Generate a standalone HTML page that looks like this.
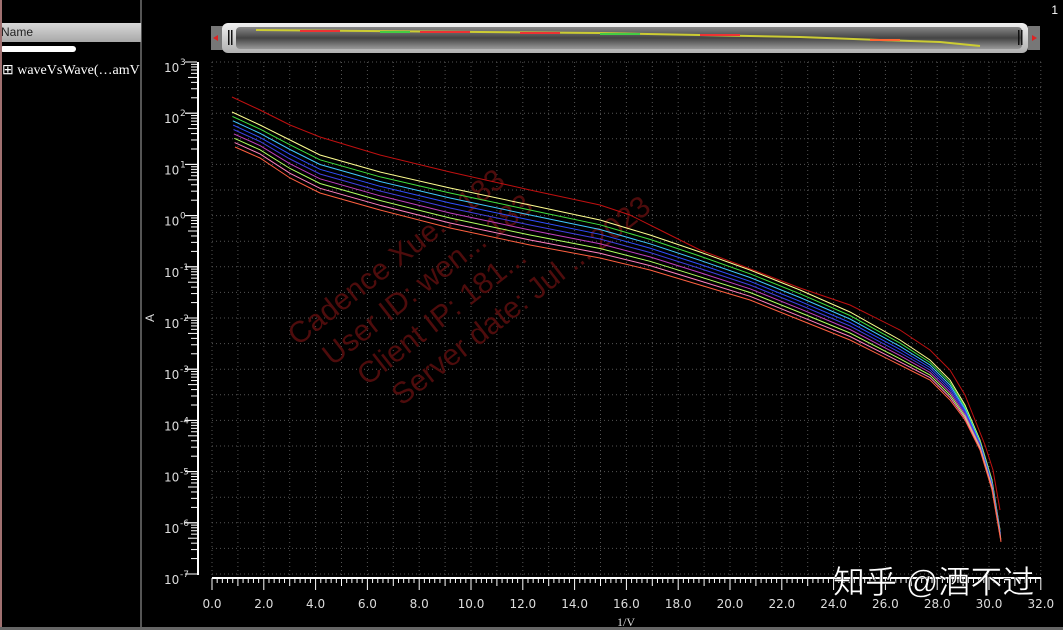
<!DOCTYPE html>
<html><head><meta charset="utf-8"><style>
body{margin:0;width:1063px;height:630px;background:#000;overflow:hidden;position:relative;font-family:"Liberation Sans",sans-serif}
.left{position:absolute;left:0;top:0;width:140px;height:630px;border-right:2px solid #555}
.hdr{position:absolute;left:0;top:23px;width:140px;height:19px;background:linear-gradient(#d8d8d8,#a8a8a8);color:#222;font-size:12px;line-height:19px;padding-left:1px}
.bar{position:absolute;left:0;top:46px;width:76px;height:6px;background:#fff;border-radius:3px}
.item{position:absolute;left:2px;top:62px;color:#fff;font-family:"Liberation Serif",serif;font-size:14px;white-space:nowrap;width:138px;overflow:hidden}
.edge{position:absolute;left:0;top:0;width:2px;height:630px;background:#a07070}
.bot{position:absolute;left:0;top:627px;width:1063px;height:3px;background:#666}
</style></head><body>
<div class="left"><div class="hdr">Name</div><div class="bar"></div><div class="item">⊞ waveVsWave(…amV</div></div>
<div class="edge"></div>
<div style="position:absolute;right:5px;top:3px;color:#fff;font-size:12px">1</div>
<svg width="1063" height="630" style="position:absolute;left:0;top:0" id="s">
<defs>
<linearGradient id="g1" x1="0" y1="0" x2="0" y2="1"><stop offset="0" stop-color="#f0f0f0"/><stop offset="1" stop-color="#b0b0b0"/></linearGradient>
<linearGradient id="g2" x1="0" y1="0" x2="0" y2="1"><stop offset="0" stop-color="#888"/><stop offset=".5" stop-color="#444"/><stop offset="1" stop-color="#999"/></linearGradient>
</defs>
<rect x="211" y="26" width="14" height="24" fill="#777"/><path d="M213 38l5-3v6z" fill="#d22"/>
<rect x="1028" y="26" width="12" height="24" fill="#777"/><path d="M1037 38l-5-3v6z" fill="#d22"/>
<rect x="222" y="23" width="806" height="30" rx="6" fill="url(#g1)"/>
<rect x="236" y="27" width="786" height="22" rx="4" fill="url(#g2)"/>
<rect x="228" y="30" width="1.5" height="15" fill="#111"/><rect x="231" y="30" width="1.5" height="15" fill="#111"/>
<rect x="1018" y="30" width="1.5" height="15" fill="#111"/><rect x="1021" y="30" width="1.5" height="15" fill="#111"/>
<path d="M256 30 L600 33 L800 37 L880 40 L940 42 L980 46" stroke="#cc3" stroke-width="2" fill="none"/>
<path d="M300 31 L340 31 M420 32 L470 32 M520 33 L560 33 M700 35 L740 35" stroke="#e33" stroke-width="2" fill="none"/>
<path d="M380 32 L410 32 M600 34 L640 34" stroke="#4c4" stroke-width="2" fill="none"/>
<path d="M870 40 L900 40" stroke="#f63" stroke-width="2"/>
<g id="grid"></g>
<g transform="translate(480,255) rotate(-38)" fill="#4e0c0c" font-size="30" font-family="Liberation Sans,sans-serif">
<text x="-200" y="-40">Cadence Xue... 183</text>
<text x="-185" y="-3">User ID: wen... 183</text>
<text x="-170" y="34">Client IP: 181...</text>
<text x="-155" y="71">Server date: Jul ... 2023</text>
</g>
<g id="curves" fill="none" stroke-width="1"></g>
<g fill="#fff">
<rect x="197" y="62" width="2" height="513"/>
<rect x="212" y="577" width="829" height="2"/>
</g>
<g id="ticks" stroke="#fff" stroke-width="1"></g>
<g id="lbl" fill="#ddd" font-family="DejaVu Sans,sans-serif" font-size="12"></g>
<text x="154" y="318" fill="#ddd" font-size="12" transform="rotate(-90 154 318)" text-anchor="middle">A</text>
<text x="626" y="626" fill="#ddd" font-size="12" font-family="Liberation Serif,serif" text-anchor="middle">1/V</text>
<text x="833" y="593" fill="#fff" font-size="32" font-family="Liberation Sans,Noto Sans CJK SC,sans-serif" stroke="#000" stroke-width="0.5">知乎 @酒不过</text>
</svg>
<div class="bot"></div>
<script>
var ns="http://www.w3.org/2000/svg";
function el(p,t,a){var e=document.createElementNS(ns,t);for(var k in a)e.setAttribute(k,a[k]);document.getElementById(p).appendChild(e);return e;}
for(var x=212;x<=1041;x+=25.9)el("grid","line",{x1:x,y1:62,x2:x,y2:575,stroke:"#555","stroke-dasharray":"1 3","stroke-width":1});
for(var y=62;y<=575;y+=25.6)el("grid","line",{x1:212,y1:y,x2:1041,y2:y,stroke:"#555","stroke-dasharray":"1 3","stroke-width":1});
for(var d=0;d<10;d++){var y0=62+d*51.2;
 for(var m=1;m<=10;m++){var yy=y0+51.2-51.2*Math.log10(m);var w=(m==1||m==10)?12:(m==5?9:6);el("ticks","line",{x1:197-w,y1:yy,x2:197,y2:yy});}}
var ex=["3","2","1","0","-1","-2","-3","-4","-5","-6","-7"];
for(var i=0;i<11;i++){var y=62+i*51.2;var t=el("lbl","text",{x:164,y:y+10});t.textContent="10";var s=el("lbl","text",{x:180,y:y+3,"font-size":9});s.textContent=ex[i];}
for(var i=0;i<=160;i++){var x=212+i*25.9/5;var h=i%10==0?12:(i%5==0?8:5);el("ticks","line",{x1:x,y1:578,x2:x,y2:578+h});}
for(var v=0;v<=32;v+=2){var t=el("lbl","text",{x:212+v*25.9,y:608,"text-anchor":"middle"});t.textContent=v.toFixed(1);}
var tp=[[232,112],[260,125],[290,140],[320,155],[380,172],[450,188],[530,205],[600,220],[650,235],[700,252],[750,270],[800,290],[850,312],[900,340],[930,360],[950,380],[965,405],[980,440],[992,480],[1000,530]];
var bt=[[235,147],[260,158],[290,178],[320,193],[380,210],[450,228],[530,245],[600,258],[650,270],[700,285],[750,300],[800,320],[850,340],[900,365],[930,380],[950,400],[965,420],[980,450],[992,490],[1001,542]];
var cols=["#ffff90","#40e040","#40c8ff","#3050ff","#4040e0","#c040c0","#b0ff60","#ff80c0","#ff6040"];
for(var c=0;c<9;c++){var f=c/8;var dd="";for(var i=0;i<tp.length;i++){var x=tp[i][0]*(1-f)+bt[i][0]*f,y=tp[i][1]*(1-f)+bt[i][1]*f;dd+=(i?"L":"M")+x.toFixed(1)+" "+y.toFixed(1);}el("curves","path",{d:dd,stroke:cols[c]});}
var red=[[232,97],[260,110],[290,125],[320,137],[380,155],[450,172],[530,190],[600,205],[630,215],[660,230],[700,250],[740,265],[800,288],[850,305],[900,330],[930,350],[950,370],[965,395],[975,420],[985,445],[993,470],[1000,510]];
var rd="";red.forEach(function(p,i){rd+=(i?"L":"M")+p[0]+" "+p[1];});el("curves","path",{d:rd,stroke:"#c01010"});
</script>
</body></html>
